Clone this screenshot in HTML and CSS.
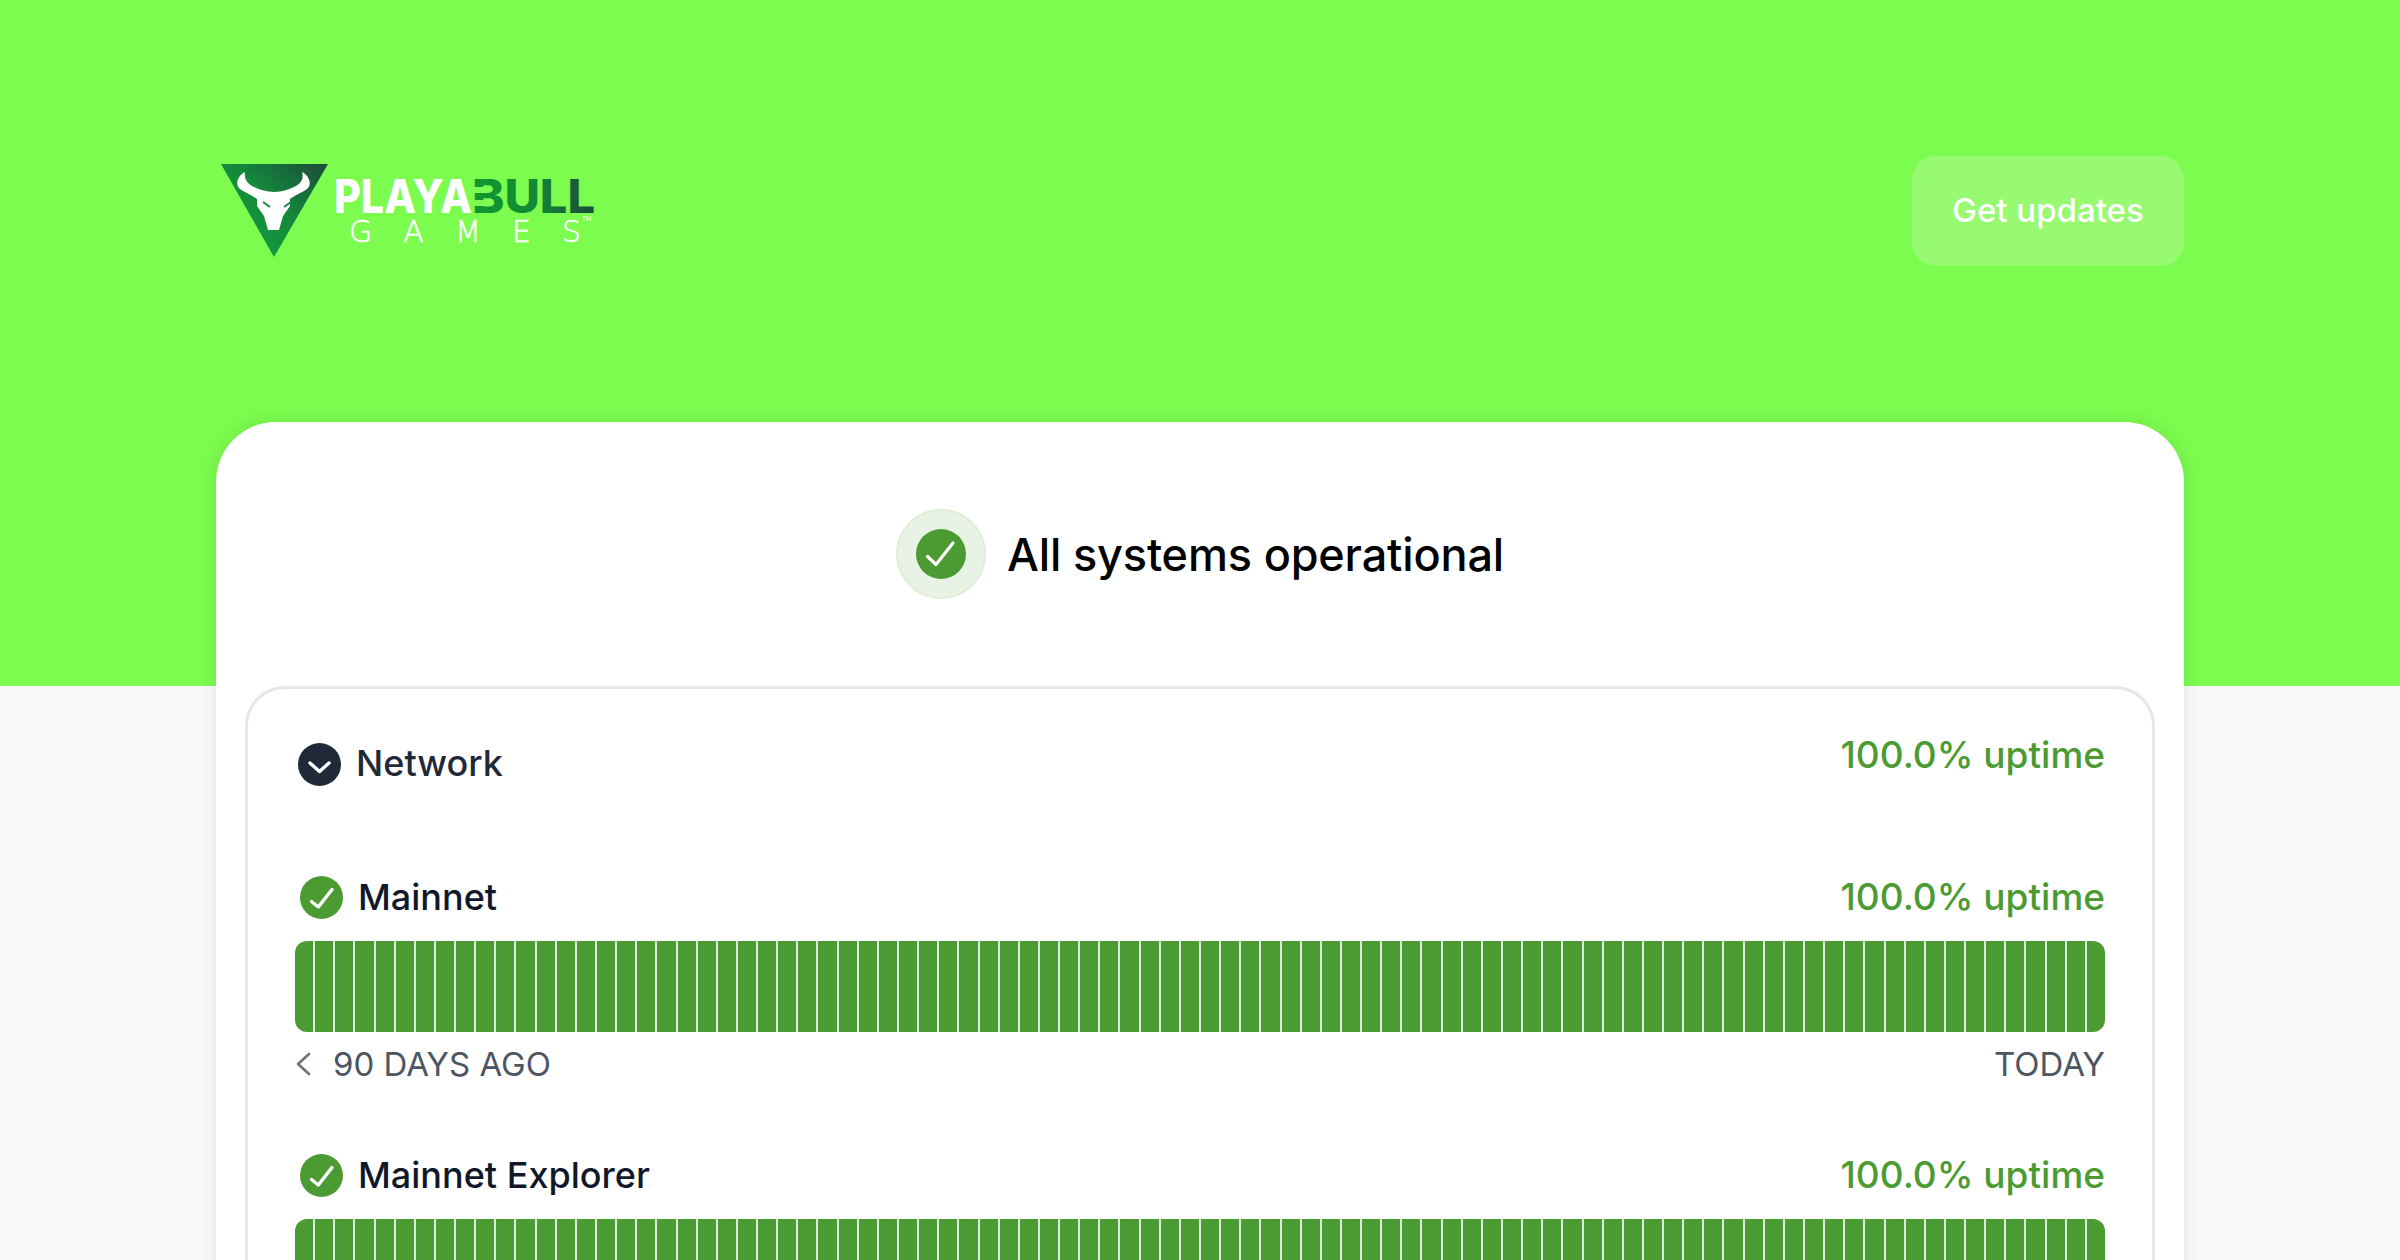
FILE: index.html
```html
<!DOCTYPE html>
<html lang="en">
<head>
<meta charset="utf-8">
<title>PlayaBull Games Status</title>
<link rel="stylesheet" href="styles.css">
</head>
<body>
<div class="page">
  <header class="header">
    <svg class="logo" viewBox="0 0 384 100" width="384" height="100" role="img" aria-label="PlayaBull Games">
      <defs>
        <linearGradient id="tri" x1="0" y1="1" x2="1" y2="0">
          <stop offset="0" stop-color="#12a53c"/>
          <stop offset="0.55" stop-color="#15883b"/>
          <stop offset="1" stop-color="#1c4a3c"/>
        </linearGradient>
        <linearGradient id="bull" gradientUnits="userSpaceOnUse" x1="256" y1="0" x2="379" y2="0">
          <stop offset="0" stop-color="#12972f"/>
          <stop offset="0.5" stop-color="#128a36"/>
          <stop offset="1" stop-color="#1c4a3c"/>
        </linearGradient>
      </defs>
      <polygon points="5,3 112,3 58,96" fill="url(#tri)"/>
      <path d="M29 11C21 15 19 24 24 28C28 31 34 33 41 38L41 45L48 55L52 69H63L67 55L74 45L74 38C81 33 87 31 91 28C96 24 94 15 86 11C88 18 85 22 80 25C74 28 66 31 58 31C50 31 42 28 36 25C31 22 28 18 29 11Z" fill="#fff"/>
      <path d="M47 41L54 46M75 41L68 46" stroke="#15883b" stroke-width="2" fill="none"/>
      <text class="logo-bull" x="256" y="52" textLength="123" lengthAdjust="spacingAndGlyphs" fill="url(#bull)">BULL</text>
      <rect x="254" y="26" width="16" height="6" fill="#7bfc4e"/>
      <rect x="254" y="39" width="16" height="6" fill="#7bfc4e"/>
      <text class="logo-playa" x="118" y="52" textLength="138" lengthAdjust="spacingAndGlyphs">PLAYA</text>
      <text class="logo-games" x="133" y="81" textLength="232" lengthAdjust="spacing">GAMES</text>
      <text class="logo-tm" x="366" y="60">TM</text>
    </svg>
    <a class="updates-btn" href="#">Get updates</a>
  </header>

  <main class="card">
    <div class="status">
      <span class="status-halo">
        <svg class="status-icon" viewBox="0 0 50 50" width="50" height="50" aria-hidden="true">
          <circle cx="25" cy="25" r="25" fill="#4b9b32"/>
          <path d="M11.5 27.5L20 35.5L37 14" fill="none" stroke="#fff" stroke-width="3.2" stroke-linecap="round" stroke-linejoin="round"/>
        </svg>
      </span>
      <h1 class="status-title">All systems operational</h1>
    </div>

    <section class="group">
      <div class="group-head">
        <div class="name name-group">
          <svg class="icon" viewBox="0 0 43 43" width="43" height="43" aria-hidden="true">
            <circle cx="21.5" cy="21.5" r="21.5" fill="#1f2937"/>
            <path d="M12 20L21.5 28.5L31 20" fill="none" stroke="#fff" stroke-width="3.4" stroke-linecap="round" stroke-linejoin="round"/>
          </svg>
          <span class="label">Network</span>
        </div>
        <span class="uptime uptime-group">100.0% uptime</span>
      </div>

      <div class="service">
        <div class="service-head">
          <div class="name">
            <svg class="icon" viewBox="0 0 43 43" width="43" height="43" aria-hidden="true">
              <circle cx="21.5" cy="21.5" r="21.5" fill="#4b9b32"/>
              <path d="M11.5 25.5L18.3 31L32 13.5" fill="none" stroke="#fff" stroke-width="3.4" stroke-linecap="round" stroke-linejoin="round"/>
            </svg>
            <span class="label">Mainnet</span>
          </div>
          <span class="uptime">100.0% uptime</span>
        </div>
        <div class="bars"></div>
        <div class="range">
          <span class="range-start">
            <svg class="chev" viewBox="0 0 16 24" width="16" height="24" aria-hidden="true">
              <path d="M14 2L3 12L14 22" fill="none" stroke="#6b7280" stroke-width="2.6" stroke-linecap="round" stroke-linejoin="round"/>
            </svg>
            90 DAYS AGO
          </span>
          <span>TODAY</span>
        </div>
      </div>

      <div class="service">
        <div class="service-head">
          <div class="name">
            <svg class="icon" viewBox="0 0 43 43" width="43" height="43" aria-hidden="true">
              <circle cx="21.5" cy="21.5" r="21.5" fill="#4b9b32"/>
              <path d="M11.5 25.5L18.3 31L32 13.5" fill="none" stroke="#fff" stroke-width="3.4" stroke-linecap="round" stroke-linejoin="round"/>
            </svg>
            <span class="label">Mainnet Explorer</span>
          </div>
          <span class="uptime">100.0% uptime</span>
        </div>
        <div class="bars"></div>
      </div>
    </section>
  </main>
</div>
</body>
</html>
```
FILE: styles.css
```css
* { box-sizing: border-box; }
html, body { margin: 0; height: 100%; overflow: hidden; }
body { font-family: Inter, "Liberation Sans", sans-serif; }

.page {
  height: 1260px;
  overflow: hidden;
  padding: 156px 216px 0;
  background: linear-gradient(#7bfc4e 686px, #f9fafb 686px);
}

.header {
  display: flex;
  justify-content: space-between;
  align-items: center;
  height: 110px;
  margin-bottom: 156px;
}
.logo { display: block; }
.logo-playa, .logo-bull { font-family: Inter, sans-serif; font-weight: 800; font-size: 46px; }
.logo-playa { fill: #fff; }
.logo-games { font-family: "DejaVu Sans", sans-serif; font-weight: 200; font-size: 30px; fill: #fff; stroke: #fff; stroke-width: 0.6px; }
.logo-tm { font-family: Inter, sans-serif; font-weight: 400; font-size: 6px; fill: #fff; }

.updates-btn {
  display: flex;
  align-items: center;
  justify-content: center;
  width: 272px;
  height: 110px;
  padding-bottom: 2px;
  border-radius: 24px;
  background: #97fa71;
  color: #fff;
  font-size: 33px;
  font-weight: 500;
  text-decoration: none;
}

.card {
  background: #fff;
  border-radius: 60px 60px 0 0;
  padding: 87px 29px 0;
  height: 900px;
  box-shadow: 0 0 20px rgba(17, 24, 39, 0.1);
}

.status {
  display: flex;
  align-items: center;
  justify-content: center;
  gap: 21px;
  margin-bottom: 87px;
}
.status-halo {
  display: flex;
  align-items: center;
  justify-content: center;
  width: 90px;
  height: 90px;
  border-radius: 50%;
  background: #e9f3e5;
  border: 2px solid #deeed8;
}
.status-icon { display: block; }
.status-title {
  margin: 0;
  font-size: 45px;
  font-weight: 500;
  letter-spacing: -0.15px;
  color: #000;
}

.group {
  border: 3px solid #e5e7eb;
  border-radius: 40px;
  padding: 0 47px;
  height: 700px;
}

.group-head {
  display: flex;
  justify-content: space-between;
  align-items: flex-start;
  padding-top: 40px;
  height: 187px;
}
.name {
  display: flex;
  align-items: center;
  gap: 15px;
  font-size: 36px;
  font-weight: 500;
  color: #111827;
  padding-left: 5px;
}
.name-group { color: #1f2937; padding-left: 3px; margin-top: 12px; }
.label { margin-bottom: 2px; }
.icon { display: block; flex: none; }
.uptime {
  font-size: 37px;
  font-weight: 500;
  color: #4b9b32;
  line-height: 46px;
  margin-bottom: 2px;
}
.uptime-group { margin-top: 3px; }

.service-head {
  display: flex;
  justify-content: space-between;
  align-items: center;
  height: 43px;
  margin-bottom: 22px;
}

.bars {
  height: 91px;
  border-radius: 12px;
  background: repeating-linear-gradient(90deg, #4b9b32 0 18.13px, #dde9d8 18.13px 20.133px);
}

.range {
  display: flex;
  justify-content: space-between;
  align-items: center;
  height: 40px;
  margin-top: 12px;
  margin-bottom: 70px;
  font-size: 33px;
  color: #4b5563;
}
.range-start { display: flex; align-items: center; gap: 22px; }
.chev { display: block; }
```
